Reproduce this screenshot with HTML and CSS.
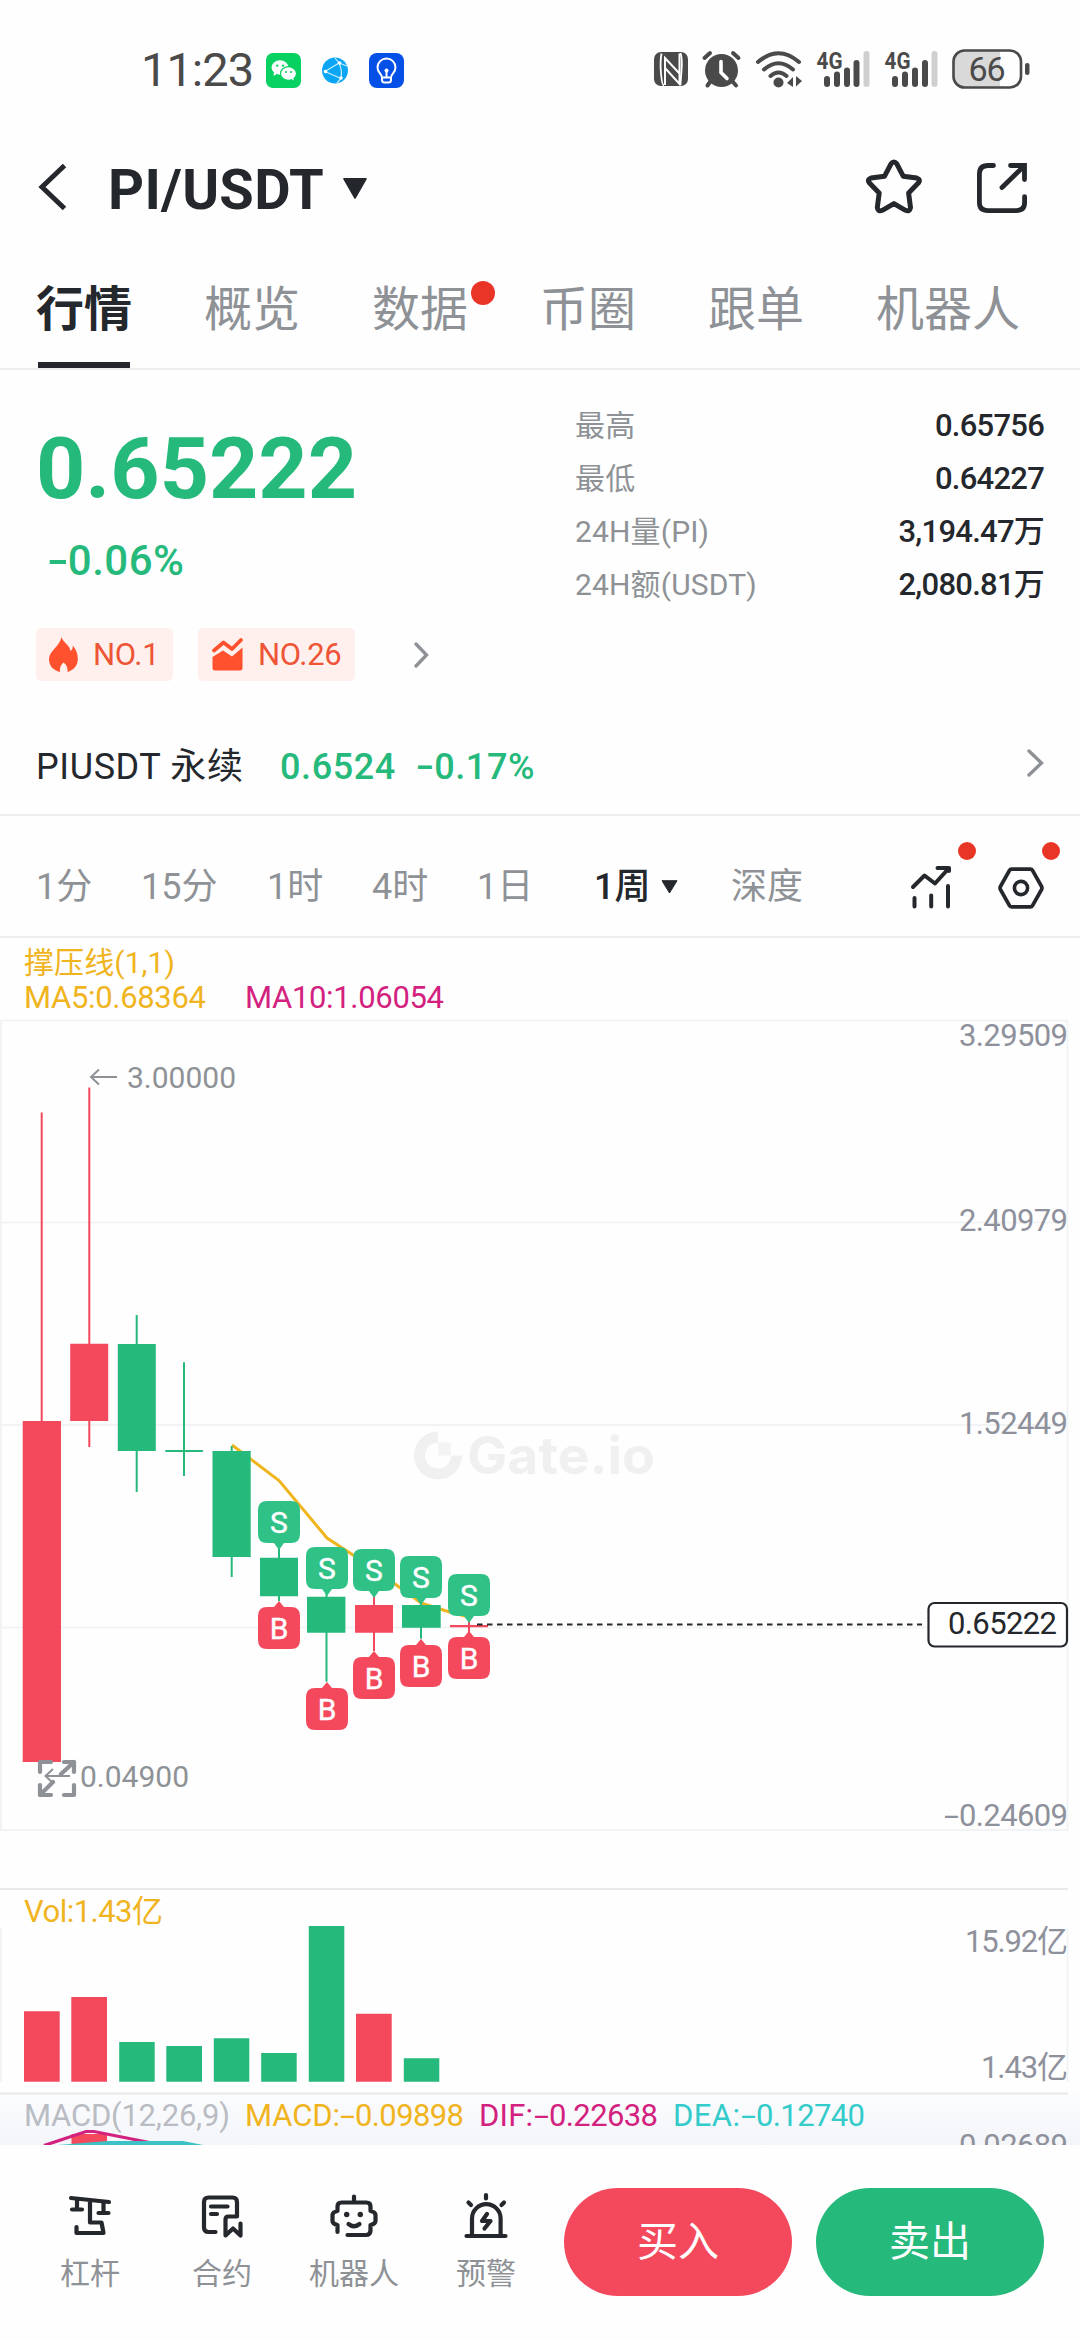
FILE: index.html
```html
<!DOCTYPE html>
<html lang="zh-CN">
<head>
<meta charset="utf-8">
<title>PI/USDT</title>
<link rel="stylesheet" href="styles.css">
</head>
<body>
<div class="screen">
  <div class="status">
    <span class="time">11:23</span>
    <svg class="app-icon" width="35" height="35" viewBox="0 0 35 35"><rect width="35" height="35" rx="7" fill="#07d160"/><ellipse cx="14" cy="14.5" rx="8.5" ry="7.2" fill="#fff"/><path d="M8 19l-.5 4 4-2.5z" fill="#fff"/><ellipse cx="22.5" cy="20.5" rx="8" ry="6.8" fill="#fff" stroke="#07d160" stroke-width="1.2"/><path d="M25 25.5l2.6 2-.2-4z" fill="#fff"/><g fill="#07d160"><circle cx="11.2" cy="12.6" r="1.2"/><circle cx="17" cy="12.6" r="1.2"/><circle cx="20" cy="19" r="1"/><circle cx="25" cy="19" r="1"/></g></svg>
    <svg class="globe" width="26" height="27" viewBox="0 0 26 27"><circle cx="13" cy="13.5" r="13" fill="#0aa6f5"/><g fill="none" stroke="#c9efff" stroke-width="1.2"><path d="M3 14.500L17 6M3 14.500l16 7M17 6l8 3M17 6c2.500 5 3 10 2 15.500M17 6l-4-5M19 21.500l-4 4.500"/></g><g fill="#fff"><circle cx="3.500" cy="14.500" r="1.800"/><circle cx="17.500" cy="6" r="1.800"/><circle cx="19" cy="21" r="1.800"/></g></svg>
    <svg class="bulb" width="35" height="35" viewBox="0 0 35 35"><rect width="35" height="35" rx="8" fill="#0550e6"/><g fill="none" stroke="#fff" stroke-width="2" stroke-linecap="round" stroke-linejoin="round"><path d="M13 24.500c0-3.500-4.500-4.500-4.500-10a9 9 0 0 1 18 0c0 5.500-4.500 6.500-4.500 10zM13 24.500v2.500q0 2.500 2.500 2.500h4q2.500 0 2.500-2.500v-2.500M17.500 24v-6"/></g><circle cx="17.500" cy="17.500" r="2" fill="#fff"/></svg>
    <svg class="status-right" width="380" height="44" viewBox="652 48 380 44">
      <rect x="654" y="52" width="34" height="34" rx="7" fill="#4a4a4a"/>
      <path d="M661.500 53.500q-1.500 8-.5 20t3 12M680.500 53q2 6 1 18t-1 14" fill="none" stroke="#fff" stroke-width="1.800"/>
      <path d="M665 85V58l14.500 15.500M679.500 53.500V84L665 68" fill="none" stroke="#fff" stroke-width="2"/>
      <circle cx="721.500" cy="70.500" r="16.500" fill="#4a4a4a"/><path d="M704.500 58l5.500-5M738.500 58l-5.500-5M710 82l-2.500 3.500M733 82l3 3.500" stroke="#4a4a4a" stroke-width="4" stroke-linecap="round"/><path d="M721 61.500v11l6 6" fill="none" stroke="#fff" stroke-width="3.600" stroke-linecap="round"/>
      <g fill="none" stroke="#4a4a4a" stroke-width="4" stroke-linecap="round"><path d="M758 62q20.500-17.500 41 0M764 69.500q14.500-12.500 29 0M770.500 76q8-7 16 0"/></g><circle cx="778.500" cy="82.500" r="5" fill="#4a4a4a"/><path d="M787 83l6-6v10zM802 81l-6 5.500V76z" fill="#4a4a4a"/>
      <g fill="#4a4a4a"><rect x="824" y="76" width="6" height="11" rx="3"/><rect x="834" y="71.500" width="6" height="15.500" rx="3"/><rect x="844" y="67.500" width="6" height="19.500" rx="3"/><rect x="853.500" y="60" width="6" height="27" rx="3"/><rect x="863.500" y="51" width="6" height="36" rx="3" fill="#cfcfcf"/></g>
      <text x="816.500" y="69" font-size="24" class="g4" textLength="26" lengthAdjust="spacingAndGlyphs">4G</text>
      <g fill="#4a4a4a"><rect x="892" y="76" width="6" height="11" rx="3"/><rect x="902" y="71.500" width="6" height="15.500" rx="3"/><rect x="912" y="67.500" width="6" height="19.500" rx="3"/><rect x="922" y="60" width="6" height="27" rx="3"/><rect x="931.500" y="51" width="6" height="36" rx="3" fill="#cfcfcf"/></g>
      <text x="884.500" y="69" font-size="24" class="g4" textLength="26" lengthAdjust="spacingAndGlyphs">4G</text>
      <path d="M964 51h36v36h-36q-10 0-10-10V61q0-10 10-10z" fill="#d9d9d9"/><rect x="953.500" y="50.500" width="67.500" height="37" rx="11" fill="none" stroke="#4a4a4a" stroke-width="2.600"/><rect x="1025" y="63" width="4.500" height="12" rx="2.200" fill="#4a4a4a"/>
      <text x="968.500" y="81" font-size="34" class="bat" textLength="37">66</text>
    </svg>
  </div>

  <div class="header">
    <svg class="back" width="28" height="46" viewBox="0 0 28 46"><path d="M25.500 1.500L3 23l22.500 21.500" fill="none" stroke="#24272c" stroke-width="5"/></svg>
    <span class="pair">PI/USDT</span>
    <svg class="tri" width="26" height="21" viewBox="0 0 26 21"><path d="M2 .8h22L13 20z" fill="#24272c" stroke="#24272c" stroke-width="1.600" stroke-linejoin="round"/></svg>
    <svg class="star" width="56" height="54" viewBox="866 159 56 54"><path d="M891 162.800q2.900-3.600 5.800 0l6.400 12.400 13.600 1.900q4.400 1.400 1.500 5l-9.700 9.900 1.900 14.600q-.8 4.600-5 2.700l-11.600-6.700-11.600 6.700q-4.200 1.900-5-2.700l1.900-14.600-9.700-9.900q-2.900-3.600 1.500-5l13.600-1.900z" fill="none" stroke="#24272c" stroke-width="5" stroke-linejoin="round"/></svg>
    <svg class="share" width="50" height="50" viewBox="977 162.500 50 50"><g fill="none" stroke="#24272c" stroke-width="4.800" stroke-linecap="round"><path d="M993.500 165h-5.500q-8.600 0-8.600 8.600v28.500q0 8.100 8.600 8.100h28q8.600 0 8.600-8.100v-6M1002 187l22-21.500M1010.500 165h14v14"/></g></svg>
  </div>

  <div class="tabs">
    <div class="tab active">行情</div><div class="tab">概览</div><div class="tab">数据<i class="dot"></i></div><div class="tab">币圈</div><div class="tab">跟单</div><div class="tab">机器人</div>
  </div>

  <div class="summary">
    <div class="quote">
      <div class="price">0.65222</div>
      <div class="change"><span class="minus">-</span>0.06%</div>
      <div class="badges">
        <span class="badge hot"><svg width="29" height="35" viewBox="0 0 29 35"><path d="M12.500 0C13.500 5 21 8 21.500 14c1.800-1 2.500-3 2.200-5.500C27 12 29 17 28.800 22.500 28.500 29 24.500 33 18.500 35c.5-4-1-7.500-4-9.500-3 2.500-4 5.500-3.500 9.500C4.500 33.500.2 29 0 22.500-.2 14 10.500 10 12.500 0z" fill="#ff512e"/></svg>NO.1</span>
        <span class="badge rise"><svg width="31" height="33" viewBox="0 0 31 33"><path d="M2 12.500l9.500-8 8.500 6.500 9-9" fill="none" stroke="#ff512e" stroke-width="3.800" stroke-linecap="round" stroke-linejoin="round"/><path d="M.5 19l10.500-6.500 9 6L30.500 9.500V30q0 2.500-2.500 2.500H3Q.5 32.500.5 30z" fill="#ff512e"/></svg>NO.26</span>
        <svg width="15" height="26" viewBox="0 0 15 26"><path d="M2 2l10.500 11L2 24" fill="none" stroke="#8e9296" stroke-width="3.400" stroke-linecap="round"/></svg>
      </div>
    </div>
    <div class="stats">
      <div class="stat"><span>最高</span><b>0.65756</b></div>
      <div class="stat"><span>最低</span><b>0.64227</b></div>
      <div class="stat"><span>24H量(PI)</span><b>3,194.47万</b></div>
      <div class="stat"><span>24H额(USDT)</span><b>2,080.81万</b></div>
    </div>
  </div>

  <div class="perp">
    <span class="perp-name">PIUSDT 永续</span><span class="up perp-price">0.6524</span><span class="up"><span class="minus">-</span>0.17%</span>
    <svg width="17" height="28" viewBox="0 0 17 28"><path d="M2 2l12.500 12L2 26" fill="none" stroke="#8e9296" stroke-width="3.400" stroke-linecap="round"/></svg>
  </div>

  <div class="frames">
    <span>1分</span><span>15分</span><span>1时</span><span>4时</span><span>1日</span>
    <span class="on">1周<svg width="17" height="14" viewBox="0 0 17 14"><path d="M1 .7h15L8.500 13z" fill="#24272c" stroke="#24272c" stroke-linejoin="round"/></svg></span>
    <span>深度</span>
    <div class="tools">
      <div class="tool"><svg width="42" height="44" viewBox="909 867 42 44"><g fill="none" stroke="#24272c" stroke-width="4" stroke-linecap="round" stroke-linejoin="round"><path d="M912 888l11.500-11.500 10.500 8L948 869M936.500 869H948v3M913.500 899v8.500M930.200 896.500v11M947 887v20.500"/></g></svg><i class="dot small"></i></div>
      <div class="tool"><svg width="46" height="42" viewBox="0 0 46 42"><path d="M13.500 2.200h19q1.300 0 2 1.200l9 16q.8 1.600 0 3.200l-9 16q-.7 1.200-2 1.200h-19q-1.300 0-2-1.200l-9-16q-.8-1.600 0-3.200l9-16q.7-1.200 2-1.200z" fill="none" stroke="#24272c" stroke-width="3.800"/><circle cx="23" cy="21" r="6.600" fill="none" stroke="#24272c" stroke-width="3.600"/></svg><i class="dot small"></i></div>
    </div>
  </div>

  <svg class="chart" width="1080" height="1207" viewBox="0 938 1080 1207">
    <defs>
      <linearGradient id="fade" x1="0" y1="0" x2="0" y2="1"><stop offset="0" stop-color="#fbfcfe"/><stop offset="1" stop-color="#f4f5f9"/></linearGradient>
      <path id="sell" d="M-12-21h24q9 0 9 9v24q0 9-9 9H5L0 28-5 21h-7q-9 0-9-9v-24q0-9 9-9z"/>
      <path id="buy" d="M-12-21h7l5-6 5 6h7q9 0 9 9v24q0 9-9 9h-24q-9 0-9-9v-24q0-9 9-9z"/>
    </defs>
    <rect x="0" y="2094" width="1080" height="51" fill="url(#fade)"/>
    <g stroke="#f2f3f4" stroke-width="2">
      <path d="M0 1020.500h1068M0 1222.500h1068M0 1425h1068M0 1627.500h1068M0 1830h1068M1 1020v810M1067.500 1020v810M1 1928v154M1067.500 1928v154"/>
      <path d="M0 1889h1068M0 2093.500h1068" stroke="#e8e9eb"/>
    </g>

    <g class="watermark">
      <path d="M438 1431.500a24 24 0 1 0 24 24h-11a13 13 0 1 1-13-13z"/><path d="M438 1442.500h13v13h-13z" opacity=".7"/>
      <text x="467" y="1474" font-size="52" textLength="188" lengthAdjust="spacingAndGlyphs">Gate.io</text>
    </g>

    <g class="t yellow"><text x="24" y="973" font-size="30" textLength="151">撑压线(1,1)</text><text x="24" y="1008" font-size="31" textLength="182">MA5:0.68364</text></g>
    <text class="t pink" x="245" y="1008" font-size="31" textLength="199">MA10:1.06054</text>
    <g class="t axis" font-size="31">
      <text x="959" y="1046" textLength="109">3.29509</text><text x="959" y="1231" textLength="109">2.40979</text><text x="959" y="1434" textLength="109">1.52449</text>
      <text x="959" y="1825.500" textLength="109">0.24609</text><text x="944" y="1825.500" textLength="15" lengthAdjust="spacingAndGlyphs">-</text>
      <text x="965" y="1952" textLength="103">15.92亿</text><text x="981" y="2078" textLength="87">1.43亿</text><text x="959" y="2156" textLength="109">0.02689</text>
    </g>
    <g class="t mark" font-size="30"><text x="127" y="1087.500" textLength="109">3.00000</text></g>
    <path d="M99 1069.500l-8 7.500 8 7.500M91 1077h26" fill="none" stroke="#8e9296" stroke-width="2"/>

    <g fill="#f4495d" stroke="none">
      <path d="M40.700 1112.500h2V1422h-2zM22.700 1421H61v341H22.700zM88.300 1087.500h2V1447h-2zM70.200 1343.700h38V1421h-38z"/>
      <path d="M373 1590h2v61h-2zM355 1605h38v27.700h-38zM468 1618h2v14h-2zM450 1625h38v2.300h-38z"/>
    </g>
    <path d="M232 1445l47 35.500 48 57.500 26 17 42 29 26 19 28.500 9 19.500 5" fill="none" stroke="#f0b41e" stroke-width="3"/>
    <g fill="#25b97b">
      <path d="M135.700 1315h2v177h-2zM117.800 1344h38v107h-38zM183 1362.300h2V1476h-2zM165.300 1450h37.600v2h-37.600zM230.700 1446h2v131h-2zM212.500 1451h38.200v106h-38.200zM278 1540h2v61h-2zM260 1557.700h38v38.600h-38zM325.500 1590h2v91.700h-2zM307 1596.700h38.400v36H307zM420 1603h2v35.700h-2zM402 1605h38.700v22.700H402z"/>
    </g>
    <path d="M477 1624.500h445" stroke="#24272c" stroke-width="2" stroke-dasharray="5.500 4.500"/>
    <g fill="#30c187"><use href="#sell" x="279" y="1522"/><use href="#sell" x="327" y="1568"/><use href="#sell" x="374" y="1570"/><use href="#sell" x="421" y="1577"/><use href="#sell" x="469" y="1595"/></g>
    <g fill="#f4495d"><use href="#buy" x="279" y="1628"/><use href="#buy" x="327" y="1709"/><use href="#buy" x="374" y="1678"/><use href="#buy" x="421" y="1666"/><use href="#buy" x="469" y="1658"/></g>
    <g class="signal" font-size="30">
      <text x="279" y="1532.500">S</text><text x="327" y="1578.500">S</text><text x="374" y="1580.500">S</text><text x="421" y="1587.500">S</text><text x="469" y="1605.500">S</text>
      <text x="279" y="1639">B</text><text x="327" y="1720">B</text><text x="374" y="1689">B</text><text x="421" y="1677">B</text><text x="469" y="1669">B</text>
    </g>

    <rect x="928.500" y="1603" width="138.500" height="43.500" rx="6" fill="#fff" stroke="#24272c" stroke-width="2.200"/>
    <text class="t dark" x="948" y="1634" font-size="31" textLength="109">0.65222</text>

    <g fill="none" stroke="#8e9296" stroke-width="4.200" stroke-linecap="round" stroke-linejoin="round"><path d="M40 1772v-10h11M64 1762h10v10M74 1762l-13 12M40 1785v10h11M40 1795l13-13M64 1795h10v-10"/></g>
    <path d="M53 1769l-7.500 7 7.500 7M45.500 1776H70" fill="none" stroke="#8e9296" stroke-width="2"/>
    <g class="t mark" font-size="30"><text x="80" y="1786.500" textLength="109">0.04900</text></g>

    <text class="t yellow" x="24" y="1922" font-size="31" textLength="139">Vol:1.43亿</text>
    <g fill="#f4495d"><path d="M24 2011.300h35.700v70.400H24zM71.300 1997H107v84.700H71.300zM356 2013.700h35.700v68H356z"/></g>
    <g fill="#25b97b"><path d="M119.200 2042h35.500v39.700h-35.500zM166.300 2046H202v35.700h-35.700zM213.800 2038.300h35.500v43.400h-35.500zM261.200 2053h35.500v28.700h-35.500zM308.800 1926h35.500v155.700h-35.500zM403.800 2058.300h35.500v23.400h-35.500z"/></g>

    <g class="t" font-size="31">
      <text x="24" y="2126" textLength="206" fill="#b9bcc3">MACD(12,26,9)</text>
      <g class="yellow"><text x="245" y="2126" textLength="95">MACD:</text><text x="340" y="2126" textLength="15" lengthAdjust="spacingAndGlyphs">-</text><text x="355" y="2126" textLength="109">0.09898</text></g>
      <g class="pink"><text x="479" y="2126" textLength="54">DIF:</text><text x="534" y="2126" textLength="15" lengthAdjust="spacingAndGlyphs">-</text><text x="549" y="2126" textLength="109">0.22638</text></g>
      <g class="cyan"><text x="673" y="2126" textLength="67">DEA:</text><text x="741" y="2126" textLength="15" lengthAdjust="spacingAndGlyphs">-</text><text x="756" y="2126" textLength="109">0.12740</text></g>
    </g>
    <rect x="71.500" y="2134" width="35.500" height="11" fill="#f4495d"/><path d="M44 2145.500l42-14h8l58 11.500" fill="none" stroke="#d3217f" stroke-width="3.200"/><path d="M58 2145l50-4h75l20 4z" fill="#3cc1c8"/>
  </svg>

  <div class="footer">
    <div class="nav"><svg width="48" height="48" viewBox="66 2192 48 48"><g class="ln"><path d="M71 2198l38 4M77 2199v10.500M72 2209.500h10M103.500 2202v11M98.500 2213h10M90 2200.500v22h11.500l2 10.500h-27v-6"/></g></svg>杠杆</div>
    <div class="nav"><svg width="48" height="48" viewBox="198 2192 48 48"><g class="ln"><path d="M215.500 2232h-7q-4.500 0-4.500-4.500V2202q0-4.500 4.500-4.500h24q4.500 0 4.500 4.500v14.500h-8.500q-3 0-3 3v16l7.500-7 7.500 7v-12M211 2206.500h16.500M211 2214h6"/></g></svg>合约</div>
    <div class="nav"><svg width="48" height="48" viewBox="330 2192 48 48"><g class="ln"><path d="M354 2196.500v6M337.500 2232v-7q-5-1-5-4v-6q0-3 5-4v-4.500q0-4 4-4h25q4 0 4 4v4.500q5 1 5 4v6q0 3-5 4v5.500q0 4.500-4.500 4.500h-18.500M348.500 2224q5.500 4.500 11 0"/></g><circle cx="346.700" cy="2214.500" r="2.700" fill="#24272c"/><circle cx="360.300" cy="2214.500" r="2.700" fill="#24272c"/></svg>机器人</div>
    <div class="nav"><svg width="48" height="48" viewBox="462 2192 48 48"><g class="ln"><path d="M466.500 2236h39M472 2236v-17.500a14.300 14.300 0 0 1 28.600 0V2236M486 2195v3.500M468.500 2202.500l2.500 2.500M504 2202.500l-2.500 2.500M487 2214l-5 7h8.500l-6 7.500"/></g></svg>预警</div>
    <div class="btn buy">买入</div>
    <div class="btn sell">卖出</div>
  </div>
</div>
</body>
</html>
```
FILE: styles.css
```css
* { box-sizing: border-box; }
body {
  margin: 0;
  background: #fefefe;
  color: #24272c;
  font-family: Roboto, "Noto Sans CJK SC", sans-serif;
}
svg { display: block; flex: none; overflow: visible; }
i { font-style: normal; }
.screen { width: 1080px; height: 2340px; overflow: hidden; display: flex; flex-direction: column; }

.status { height: 140px; display: flex; align-items: center; padding: 0 48px 0 141px; }
.time { font-size: 47px; line-height: 60px; width: 125px; letter-spacing: -1px; color: #4a4a4a; }
.globe { margin-left: 21px; }
.bulb { margin-left: 21px; }
.status-right { margin-left: auto; }
.g4 { font-weight: 700; fill: #4a4a4a; }
.bat { font-weight: 400; fill: #4a4a4a; }

.header { height: 94px; display: flex; align-items: center; padding: 0 53px 0 39px; }
.pair { margin-left: 41px; font-size: 56px; line-height: 70px; font-weight: 700; width: 216px; letter-spacing: 0.3px; white-space: nowrap; padding-top: 6px; }
.tri { margin-left: 18px; margin-top: 3px; }
.star { margin-left: auto; }
.share { margin-left: 55px; margin-top: 1px; }

.tabs { height: 136px; display: flex; gap: 72px; padding: 46px 36px 0; border-bottom: 2px solid #eeeeef; }
.tab { position: relative; font-size: 48px; line-height: 60px; color: #8e9296; white-space: nowrap; font-weight: 400; }
.tab.active { color: #24272c; font-weight: 700; }
.tab.active::after { content: ""; display: block; height: 6px; margin: 22px 2px 0; background: #24272c; }
.dot { position: absolute; left: 99px; top: 1px; width: 24px; height: 24px; border-radius: 50%; background: #e93526; }

.summary { height: 311px; display: flex; justify-content: space-between; padding: 0 36px; }
.quote { padding-top: 59px; }
.price { font-size: 86px; line-height: 80px; font-weight: 700; color: #25b97b; }
.change { margin: 22px 0 37px 12px; font-size: 42px; line-height: 60px; font-weight: 500; color: #25b97b; letter-spacing: 0.5px; }
.minus { display: inline-block; transform: scaleX(1.5); margin: 0 .06em; }
.badges { display: flex; align-items: center; }
.badge { display: flex; align-items: center; height: 53px; border-radius: 5px; background: #fff0ed; color: #ee5436; font-size: 31px; letter-spacing: -0.3px; }
.hot { width: 137px; padding-left: 13px; gap: 15px; }
.rise { width: 157px; margin: 0 59px 0 25px; padding-left: 14px; gap: 15px; }
.stats { width: 469px; padding-top: 29px; }
.stat { display: flex; justify-content: space-between; font-size: 30px; line-height: 53px; color: #8e9296; letter-spacing: 0.15px; }
.stat b { font-weight: 500; color: #24272c; font-size: 31px; letter-spacing: -0.75px; }

.perp { height: 135px; padding: 38px 36px 0; display: flex; align-items: center; border-bottom: 2px solid #eeeeef; font-size: 36px; line-height: 50px; }
.perp-name { width: 244px; white-space: nowrap; letter-spacing: 0.6px; }
.perp-price { width: 137px; }
.up { color: #25b97b; font-weight: 500; letter-spacing: 0.6px; }
.perp svg { margin-left: auto; margin-top: -7px; }

.frames { height: 122px; padding: 22px 36px 0; display: grid; grid-template-columns: 105px 126px 105px 105px 117px 137px 1fr auto; align-items: center; border-bottom: 2px solid #eeeeef; font-size: 36px; line-height: 50px; color: #8e9296; }
.frames .on { display: flex; align-items: center; gap: 11px; color: #24272c; font-weight: 500; }
.tools { display: flex; gap: 46px; align-items: center; }
.tool { position: relative; top: 1px; }
.dot.small { width: 18px; height: 18px; left: auto; right: -24px; top: -24px; }
.tool:last-child .small { right: -16px; top: -25px; }

.chart { overflow: hidden; }
.t { white-space: pre; }
.yellow { fill: #f0b41e; }
.pink { fill: #d3217f; }
.cyan { fill: #34cbcb; }
.axis { fill: #8e919c; }
.mark { fill: #8e9296; }
.dark { fill: #24272c; }
.signal { fill: #fff; font-weight: 400; text-anchor: middle; stroke: #fff; stroke-width: .4px; }
.watermark { fill: #f0f0f0; font-family: Inter, sans-serif; font-weight: 700; }

.footer { height: 195px; display: flex; padding: 43px 36px 0 24px; }
.nav { width: 132px; height: 108px; padding-top: 4px; display: flex; flex-direction: column; align-items: center; font-size: 30px; line-height: 40px; gap: 14px; color: #8e9296; white-space: nowrap; }
.ln { fill: none; stroke: #24272c; stroke-width: 4.2; stroke-linecap: round; stroke-linejoin: round; }
.btn { width: 228px; height: 108px; border-radius: 54px; color: #fff; font-size: 41px; line-height: 109px; text-align: center; }
.buy { background: #f4495d; margin-left: 12px; }
.sell { background: #25b97b; margin-left: 24px; }
```
